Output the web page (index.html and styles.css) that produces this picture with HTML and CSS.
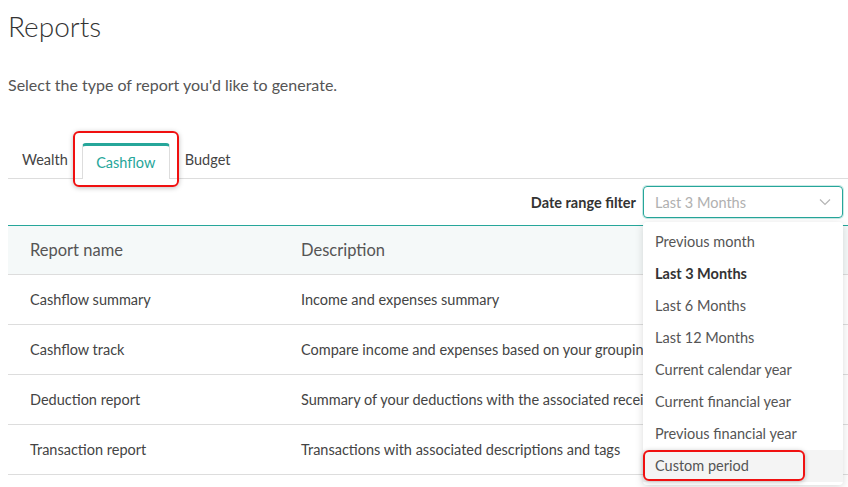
FILE: index.html
```html
<!DOCTYPE html>
<html lang="en">
<head>
    <meta charset="UTF-8">
    <meta name="viewport" content="width=device-width, initial-scale=1.0">
    <title>Reports</title>
    <link rel="stylesheet" href="styles.css">
</head>
<body>
    <div class="page">
        <h1>Reports</h1>
        <p class="intro">Select the type of report you'd like to generate.</p>

        <div class="tabs">
            <div class="tab">Wealth</div>
            <div class="tab active">Cashflow<span class="mark mark-tab"></span></div>
            <div class="tab">Budget</div>
        </div>

        <div class="filter-row">
            <label class="filter-label">Date range filter</label>
            <div class="select-wrap">
                <div class="select">
                    <span class="placeholder">Last 3 Months</span>
                    <svg class="chevron" width="12" height="8" viewBox="0 0 12 8">
                        <path d="M1 1.5 L6 6.5 L11 1.5" fill="none" stroke="#b5b5b5" stroke-width="1.2"/>
                    </svg>
                </div>
                <ul class="menu">
                    <li>Previous month</li>
                    <li class="selected">Last 3 Months</li>
                    <li>Last 6 Months</li>
                    <li>Last 12 Months</li>
                    <li>Current calendar year</li>
                    <li>Current financial year</li>
                    <li>Previous financial year</li>
                    <li class="hover">Custom period<span class="mark mark-item"></span></li>
                </ul>
            </div>
        </div>

        <table class="reports">
            <thead>
                <tr><th class="col-name">Report name</th><th>Description</th></tr>
            </thead>
            <tbody>
                <tr><td>Cashflow summary</td><td>Income and expenses summary</td></tr>
                <tr><td>Cashflow track</td><td>Compare income and expenses based on your grouping</td></tr>
                <tr><td>Deduction report</td><td>Summary of your deductions with the associated receipts</td></tr>
                <tr><td>Transaction report</td><td>Transactions with associated descriptions and tags</td></tr>
            </tbody>
        </table>
    </div>
</body>
</html>
```

FILE: styles.css
```css
html {
    overflow: hidden;
}
body {
    margin: 0;
    padding: 0;
    background: #ffffff;
    font-family: Lato, "Open Sans", sans-serif;
    color: #444;
}
.page {
    padding: 0 0 12px 8px;
}
h1 {
    margin: 0;
    padding-top: 8px;
    font-size: 28px;
    font-weight: 300;
    line-height: 36px;
    color: #333;
}
.intro {
    margin: 30px 0 0 0;
    font-size: 16px;
    line-height: 22px;
    color: #555;
}
.tabs {
    display: flex;
    align-items: flex-end;
    margin-top: 47px;
    height: 35px;
    padding-left: 14px;
    border-bottom: 1px solid #dddddd;
}
.tab {
    position: relative;
    font-size: 14.5px;
    color: #444;
    line-height: 32px;
    padding-bottom: 2px;
}
.tab.active {
    margin: 0 15px -1px 14px;
    width: 86px;
    height: 32px;
    text-align: center;
    color: #26a69a;
    background: #fff;
    border: 1px solid #dddddd;
    border-top: 3px solid #26a69a;
    border-bottom: none;
    border-radius: 4px 4px 0 0;
    padding-bottom: 1px;
    line-height: 34px;
}
.mark {
    position: absolute;
    border: 2px solid #f01010;
    border-radius: 6px;
    box-shadow: 0 1px 5px rgba(0, 0, 0, 0.25);
    pointer-events: none;
}
.mark-tab {
    left: -10px;
    top: -15px;
    width: 102px;
    height: 52px;
}
.filter-row {
    display: flex;
    justify-content: flex-end;
    align-items: center;
    padding-right: 5px;
    margin-top: 7px;
    height: 32px;
}
.filter-label {
    font-size: 14.5px;
    font-weight: bold;
    color: #333;
    margin-right: 7px;
}
.select-wrap {
    position: relative;
}
.select {
    box-sizing: border-box;
    width: 200px;
    height: 32px;
    border: 1px solid #26a69a;
    border-radius: 4px;
    box-shadow: 0 0 0 1px rgba(38, 166, 154, 0.25);
    display: flex;
    align-items: center;
    justify-content: space-between;
    padding: 0 11px;
}
.placeholder {
    font-size: 14.5px;
    color: #b0b0b0;
}
.menu {
    position: absolute;
    top: 36px;
    left: 0;
    width: 200px;
    margin: 0;
    padding: 4px 0 3px 0;
    list-style: none;
    background: #fff;
    border-radius: 4px;
    box-shadow: 0 2px 8px rgba(0, 0, 0, 0.15);
    z-index: 5;
}
.menu li {
    position: relative;
    height: 32px;
    line-height: 32px;
    padding-left: 12px;
    font-size: 14.5px;
    color: #555;
}
.menu li.selected {
    font-weight: bold;
    color: #333;
}
.menu li.hover {
    background: #f4f4f4;
}
.mark-item {
    left: 0;
    top: 0;
    width: 158px;
    height: 27px;
}
.reports {
    width: 100%;
    margin-top: 7px;
    border-collapse: collapse;
    border-top: 1px solid #26a69a;
}
.reports th {
    text-align: left;
    font-weight: normal;
    font-size: 16.5px;
    color: #555;
    background: #f5f9f9;
    height: 48px;
    padding: 0 0 0 22px;
    border-bottom: 1px solid #dddddd;
}
.reports th.col-name {
    width: 249px;
}
.reports td {
    font-size: 14.5px;
    color: #444;
    height: 49px;
    padding: 0 0 0 22px;
    border-bottom: 1px solid #dddddd;
    white-space: nowrap;
}
```
